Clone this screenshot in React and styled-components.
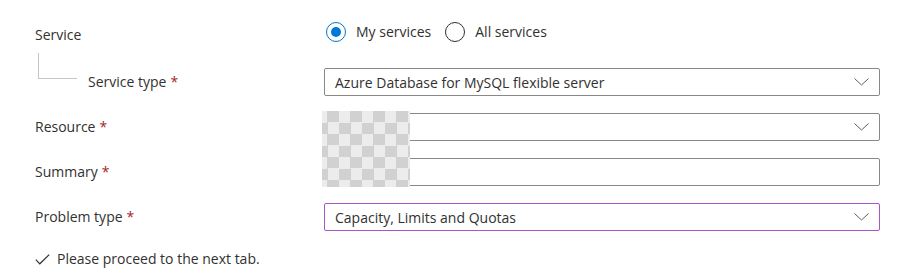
import React, { useState } from 'react';
import styled, { createGlobalStyle } from 'styled-components';

const GlobalStyle = createGlobalStyle`
  body {
    margin: 0;
    background: #ffffff;
    font-family: 'Open Sans', 'Noto Sans', sans-serif;
    color: #323130;
  }
`;

const Form = styled.div`
  position: relative;
  width: 905px;
  height: 276px;
  box-sizing: border-box;
  padding: 22px 0 0 35px;
  display: grid;
  grid-template-columns: 289px 556px;
  grid-template-rows: 29px repeat(4, 28px) auto;
  row-gap: 17px;
  align-items: center;
`;

const Label = styled.div`
  position: relative;
  font-size: 14px;
  line-height: 20px;
  padding-left: ${props => (props.nested ? '53px' : '0')};
  white-space: nowrap;
  align-self: ${props => (props.top ? 'start' : 'center')};
  margin-top: ${props => (props.top ? '3px' : '0')};

  ${props =>
    props.nested &&
    `
    &::before {
      content: '';
      position: absolute;
      left: 3px;
      top: -19px;
      width: 38px;
      height: 25px;
      border-left: 1px solid #c8c6c4;
      border-bottom: 1px solid #c8c6c4;
    }
  `}
`;

const Required = styled.span`
  color: #a4262c;
  margin-left: 4px;
`;

const RadioGroup = styled.div`
  display: flex;
  align-items: center;
  gap: 14px;
  margin-left: 2px;
  align-self: start;
`;

const RadioOption = styled.label`
  display: flex;
  align-items: center;
  gap: 10px;
  font-size: 14px;
  line-height: 20px;
  cursor: pointer;
`;

const RadioCircle = styled.span`
  width: 20px;
  height: 20px;
  box-sizing: border-box;
  border-radius: 50%;
  border: 1px solid ${props => (props.checked ? '#0078d4' : '#323130')};
  display: flex;
  align-items: center;
  justify-content: center;

  &::after {
    content: '';
    width: 10px;
    height: 10px;
    border-radius: 50%;
    background: ${props => (props.checked ? '#0078d4' : 'transparent')};
  }
`;

const Field = styled.div`
  height: 28px;
  box-sizing: border-box;
  border: 1px solid ${props => (props.focused ? '#a855c6' : '#8a8886')};
  border-radius: 2px;
  display: flex;
  align-items: center;
  justify-content: space-between;
  padding: 0 10px;
  font-size: 14px;
  background: #ffffff;
`;

const FieldText = styled.span`
  white-space: nowrap;
`;

const Message = styled.div`
  grid-column: 1 / span 2;
  display: flex;
  align-items: center;
  gap: 7px;
  font-size: 14px;
  line-height: 18px;
  margin-top: 2px;
  align-self: start;
`;

const Redaction = styled.div`
  position: absolute;
  left: 322px;
  top: 111px;
  width: 88px;
  height: 76px;
  background-image: conic-gradient(#d1d1d1 25%, #ececec 0 50%, #d1d1d1 0 75%, #ececec 0);
  background-size: 23px 23px;
  background-position: -6px 0;
`;

const Chevron = () => (
  <svg width="15" height="8" viewBox="0 0 15 8" fill="none">
    <path d="M0.5 0.5L7.5 7L14.5 0.5" stroke="#605e5c" strokeWidth="1" />
  </svg>
);

const Check = () => (
  <svg width="15" height="11" viewBox="0 0 15 11" fill="none">
    <path d="M0.8 5.6L4.8 9.8L14.2 0.6" stroke="#323130" strokeWidth="1.2" />
  </svg>
);

const App = () => {
  const [scope, setScope] = useState('mine');

  return (
    <>
      <GlobalStyle />
      <Form>
        <Label top>Service</Label>
        <RadioGroup>
          <RadioOption onClick={() => setScope('mine')}>
            <RadioCircle checked={scope === 'mine'} />
            My services
          </RadioOption>
          <RadioOption onClick={() => setScope('all')}>
            <RadioCircle checked={scope === 'all'} />
            All services
          </RadioOption>
        </RadioGroup>

        <Label nested>
          Service type<Required>*</Required>
        </Label>
        <Field>
          <FieldText>Azure Database for MySQL flexible server</FieldText>
          <Chevron />
        </Field>

        <Label>
          Resource<Required>*</Required>
        </Label>
        <Field>
          <FieldText />
          <Chevron />
        </Field>

        <Label>
          Summary<Required>*</Required>
        </Label>
        <Field />

        <Label>
          Problem type<Required>*</Required>
        </Label>
        <Field focused>
          <FieldText>Capacity, Limits and Quotas</FieldText>
          <Chevron />
        </Field>

        <Message>
          <Check />
          Please proceed to the next tab.
        </Message>

        <Redaction />
      </Form>
    </>
  );
};

export default App;
